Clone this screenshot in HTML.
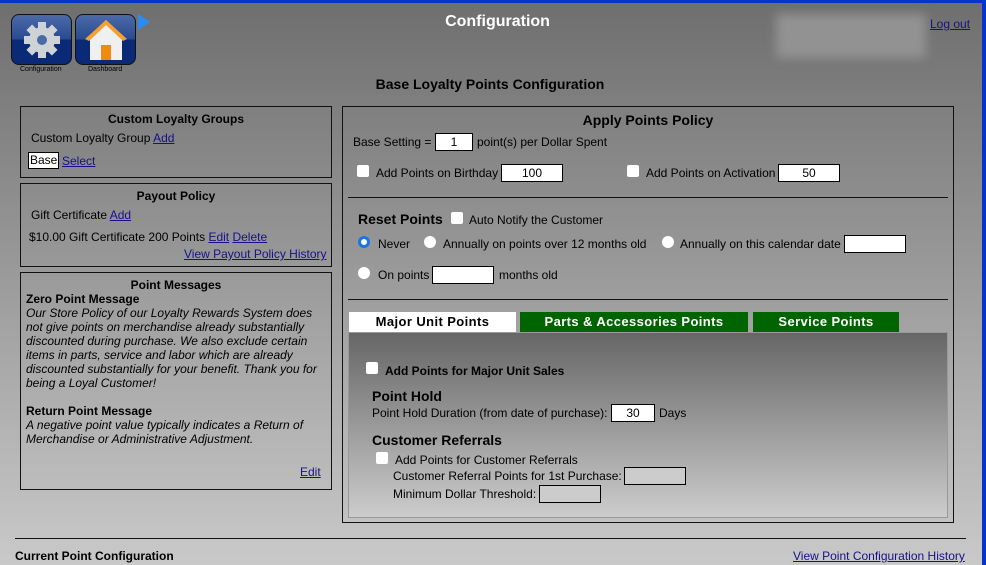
<!DOCTYPE html>
<html><head><meta charset="utf-8"><style>
*{margin:0;padding:0;box-sizing:border-box}
body{width:986px;height:565px;overflow:hidden;position:relative;font-family:"Liberation Sans",Arial,sans-serif;font-size:12px;color:#000;background:linear-gradient(#6e6e6e,#c9c9c9 565px)}
.a{position:absolute;white-space:nowrap}
a{color:#1a0f8a;text-decoration:underline}
.box{position:absolute;border:1px solid #111}
.inp{position:absolute;background:#fff;border:1px solid #000;text-align:center;height:18px;line-height:16px}
.cb{position:absolute;width:12px;height:12px;background:#fff;border-radius:2px}
.rb{position:absolute;width:12px;height:12px;background:#fff;border-radius:50%}
b{font-weight:bold}
.icon{position:absolute;width:61px;height:51px;border-radius:8px;background:linear-gradient(#4a6aa8 0,#2a4a90 50%,#0a2a78 50%,#0a2a78);border:1px solid #111}
.tab{position:absolute;top:312px;height:20px;text-align:center;font-size:13px;line-height:20px;letter-spacing:0.4px}
</style></head><body>
<div class="a" style="left:0;top:0;width:986px;height:3px;background:#0633cc"></div>
<div class="a" style="right:0;top:0;width:4px;height:565px;background:#0633cc"></div>

<div class="icon" style="left:11px;top:14px">
<svg width="61" height="51" viewBox="0 0 61 51"><g fill="#d0d3d6" transform="translate(30,25)"><circle r="13"/><g id="t"><rect x="-4" y="-18" width="8" height="8"/></g><use href="#t" transform="rotate(45)"/><use href="#t" transform="rotate(90)"/><use href="#t" transform="rotate(135)"/><use href="#t" transform="rotate(180)"/><use href="#t" transform="rotate(225)"/><use href="#t" transform="rotate(270)"/><use href="#t" transform="rotate(315)"/><circle r="5" fill="#4a6aa8"/></g></svg></div>
<div class="icon" style="left:75px;top:14px">
<svg width="61" height="51" viewBox="0 0 61 51"><polygon points="30,5 10,24 14,24 14,45 46,45 46,24 50,24" fill="#f0f0f0"/><polygon points="30,5 9,24 13,26 30,10 47,26 51,24" fill="#f5a030"/><rect x="25" y="30" width="10" height="15" fill="#f28a10"/></svg></div>
<div class="a" style="left:20px;top:66px;font-size:7px">Configuration</div>
<div class="a" style="left:88px;top:66px;font-size:7px">Dashboard</div>
<svg class="a" style="left:138px;top:14px" width="13" height="17"><polygon points="0,0 12,8 0,16" fill="#2a8cf0"/></svg>

<div class="a" style="left:0;width:995px;top:13px;text-align:center;color:#fff;font-size:16px;font-weight:bold">Configuration</div>
<div class="a" style="left:776px;top:14px;width:150px;height:44px;background:#929292;filter:blur(5px)"></div>
<div class="a" style="left:930px;top:17px"><a>Log out</a></div>
<div class="a" style="left:0;width:980px;top:76px;text-align:center;font-size:14px;font-weight:bold">Base Loyalty Points Configuration</div>

<div class="box" style="left:20px;top:106px;width:312px;height:72px"></div>
<div class="a" style="left:20px;width:312px;top:112px;text-align:center"><b>Custom Loyalty Groups</b></div>
<div class="a" style="left:31px;top:131px">Custom Loyalty Group <a>Add</a></div>
<div class="a" style="left:28px;top:152px;background:#fff;border:1px solid #000;padding:0 1px;line-height:15px">Base</div>
<div class="a" style="left:62px;top:154px"><a>Select</a></div>

<div class="box" style="left:20px;top:183px;width:312px;height:84px"></div>
<div class="a" style="left:20px;width:312px;top:189px;text-align:center"><b>Payout Policy</b></div>
<div class="a" style="left:31px;top:208px">Gift Certificate <a>Add</a></div>
<div class="a" style="left:29px;top:230px">$10.00 Gift Certificate 200 Points <a>Edit</a> <a>Delete</a></div>
<div class="a" style="left:184px;top:247px"><a>View Payout Policy History</a></div>

<div class="box" style="left:20px;top:272px;width:312px;height:218px"></div>
<div class="a" style="left:20px;width:312px;top:278px;text-align:center"><b>Point Messages</b></div>
<div class="a" style="left:26px;top:292px"><b>Zero Point Message</b></div>
<div class="a" style="left:26px;top:306px;white-space:normal;width:300px;font-style:italic;line-height:14px">Our Store Policy of our Loyalty Rewards System does not give points on merchandise already substantially discounted during purchase. We also exclude certain items in parts, service and labor which are already discounted substantially for your benefit. Thank you for being a Loyal Customer!</div>
<div class="a" style="left:26px;top:404px"><b>Return Point Message</b></div>
<div class="a" style="left:26px;top:418px;white-space:normal;width:300px;font-style:italic;line-height:14px">A negative point value typically indicates a Return of Merchandise or Administrative Adjustment.</div>
<div class="a" style="left:300px;top:465px"><a>Edit</a></div>

<div class="box" style="left:342px;top:106px;width:612px;height:417px"></div>
<div class="a" style="left:342px;width:612px;top:112px;text-align:center;font-size:14px"><b>Apply Points Policy</b></div>
<div class="a" style="left:353px;top:135px">Base Setting =</div>
<div class="inp" style="left:435px;top:133px;width:38px">1</div>
<div class="a" style="left:477px;top:135px">point(s) per Dollar Spent</div>
<div class="cb" style="left:357px;top:165px"></div>
<div class="a" style="left:376px;top:166px">Add Points on Birthday</div>
<div class="inp" style="left:501px;top:164px;width:62px">100</div>
<div class="cb" style="left:627px;top:165px"></div>
<div class="a" style="left:646px;top:166px">Add Points on Activation</div>
<div class="inp" style="left:778px;top:164px;width:62px">50</div>
<div class="a" style="left:348px;top:197px;width:600px;height:1px;background:#111"></div>
<div class="a" style="left:358px;top:211px;font-size:14px"><b>Reset Points</b></div>
<div class="cb" style="left:451px;top:212px"></div>
<div class="a" style="left:469px;top:213px">Auto Notify the Customer</div>
<div class="rb" style="left:358px;top:236px;border:3px solid #1a73e8"></div>
<div class="a" style="left:378px;top:237px">Never</div>
<div class="rb" style="left:424px;top:236px"></div>
<div class="a" style="left:443px;top:237px">Annually on points over 12 months old</div>
<div class="rb" style="left:662px;top:236px"></div>
<div class="a" style="left:680px;top:237px">Annually on this calendar date</div>
<div class="inp" style="left:844px;top:235px;width:62px"></div>
<div class="rb" style="left:358px;top:267px"></div>
<div class="a" style="left:378px;top:268px">On points</div>
<div class="inp" style="left:432px;top:266px;width:62px"></div>
<div class="a" style="left:499px;top:268px">months old</div>
<div class="a" style="left:348px;top:299px;width:600px;height:1px;background:#111"></div>

<div class="tab" style="left:349px;width:167px;background:#fff"><b>Major Unit Points</b></div>
<div class="tab" style="left:520px;width:228px;background:#006400;color:#fff"><b>Parts &amp; Accessories Points</b></div>
<div class="tab" style="left:753px;width:146px;background:#006400;color:#fff"><b>Service Points</b></div>
<div class="a" style="left:348px;top:332px;width:600px;height:186px;border:1px solid #999;background:linear-gradient(#666,#ccc)"></div>
<div class="cb" style="left:366px;top:362px"></div>
<div class="a" style="left:385px;top:364px"><b>Add Points for Major Unit Sales</b></div>
<div class="a" style="left:372px;top:388px;font-size:14px"><b>Point Hold</b></div>
<div class="a" style="left:372px;top:406px">Point Hold Duration (from date of purchase):</div>
<div class="inp" style="left:611px;top:404px;width:44px">30</div>
<div class="a" style="left:659px;top:406px">Days</div>
<div class="a" style="left:372px;top:432px;font-size:14px"><b>Customer Referrals</b></div>
<div class="cb" style="left:376px;top:452px"></div>
<div class="a" style="left:395px;top:453px">Add Points for Customer Referrals</div>
<div class="a" style="left:393px;top:469px">Customer Referral Points for 1st Purchase:</div>
<div class="inp" style="left:624px;top:467px;width:62px;background:#ccc"></div>
<div class="a" style="left:393px;top:487px">Minimum Dollar Threshold:</div>
<div class="inp" style="left:539px;top:485px;width:62px;background:#ccc"></div>

<div class="a" style="left:15px;top:538px;width:951px;height:1px;background:#111"></div>
<div class="a" style="left:15px;top:549px"><b>Current Point Configuration</b></div>
<div class="a" style="left:793px;top:549px"><a>View Point Configuration History</a></div>
</body></html>
